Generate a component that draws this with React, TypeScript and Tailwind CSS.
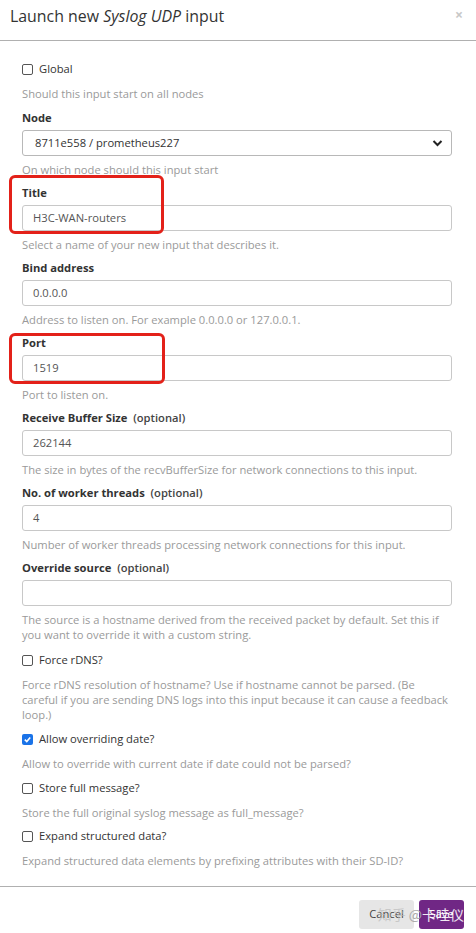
import React from "react";

const font = { fontFamily: '"Open Sans", "Noto Sans CJK SC", sans-serif' };

function Label({ text, optional }: { text: string; optional?: boolean }) {
  return (
    <div className="text-[11.2px] leading-[15px] font-bold text-[#333] mb-[5px]">
      {text}
      {optional && <span className="font-semibold text-[#444]">&nbsp; (optional)</span>}
    </div>
  );
}

function Help({ children }: { children: React.ReactNode }) {
  return <div className="text-[11.2px] leading-[15px] text-[#9a9a9a] mt-[6px]">{children}</div>;
}

function TextField({ label, value, help, optional }: { label: string; value: string; help: React.ReactNode; optional?: boolean }) {
  return (
    <div className="mb-[8px]">
      <Label text={label} optional={optional} />
      <div className="h-[26px] border border-[#c8c8c8] rounded-[3px] flex items-center pl-[10px] text-[11.2px] text-[#555]">
        {value}
      </div>
      <Help>{help}</Help>
    </div>
  );
}

function Check({ label, help, checked, cls }: { label: string; help: React.ReactNode; checked?: boolean; cls: string }) {
  return (
    <div className={cls}>
      <div className="flex items-center h-[15px] text-[11.2px] text-[#333]">
        {checked ? (
          <span className="w-[11px] h-[11px] rounded-[2px] bg-[#1a73e8] flex items-center justify-center mr-[6px]">
            <svg width="9" height="9" viewBox="0 0 10 10"><path d="M2 5.2 L4.2 7.3 L8 2.8" fill="none" stroke="#fff" strokeWidth="1.8" /></svg>
          </span>
        ) : (
          <span className="w-[11px] h-[11px] rounded-[2px] border border-[#555] mr-[6px]" />
        )}
        {label}
      </div>
      <div className="text-[11.2px] leading-[15px] text-[#9a9a9a] mt-[9px]">{help}</div>
    </div>
  );
}

export default function App() {
  return (
    <div className="w-[476px] h-[933px] bg-white relative overflow-hidden" style={font}>
      <div className="h-[41px] border-b border-[#b0b0b0] flex items-center pl-[10px] relative">
        <div className="text-[15.9px] text-[#333] leading-none -mt-[6px]">
          Launch new <i>Syslog UDP</i> input
        </div>
        <div className="absolute right-[13px] top-[4px] text-[14px] font-bold text-[#c8c8c8]">×</div>
      </div>
      <div className="pl-[22px] pr-[22px] pt-[21px]">
        <Check cls="mb-[9px]" label="Global" help="Should this input start on all nodes" />
        <div className="mb-[8px]">
          <Label text="Node" />
          <div className="h-[26px] mr-[2px] border border-[#b8b8b8] rounded-[3px] flex items-center justify-between pl-[12px] pr-[8px] text-[11.2px] text-[#333]">
            <span>8711e558 / prometheus227</span>
            <svg width="11" height="8" viewBox="0 0 11 8"><path d="M1.5 2 L5.5 6 L9.5 2" fill="none" stroke="#222" strokeWidth="2" /></svg>
          </div>
          <Help>On which node should this input start</Help>
        </div>
        <div className="pr-[2px]">
          <TextField label="Title" value="H3C-WAN-routers" help="Select a name of your new input that describes it." />
          <TextField label="Bind address" value="0.0.0.0" help="Address to listen on. For example 0.0.0.0 or 127.0.0.1." />
          <TextField label="Port" value="1519" help="Port to listen on." />
          <TextField label="Receive Buffer Size" optional value="262144" help="The size in bytes of the recvBufferSize for network connections to this input." />
          <TextField label="No. of worker threads" optional value="4" help="Number of worker threads processing network connections for this input." />
        </div>
        <div className="mb-[8px]">
          <Label text="Override source" optional />
          <div className="h-[26px] mr-[2px] border border-[#c8c8c8] rounded-[3px]" />
          <Help>The source is a hostname derived from the received packet by default. Set this if you want to override it with a custom string.</Help>
        </div>
        <Check
          cls="mt-[11px] mb-[10px]"
          label="Force rDNS?"
          help={
            <>
              Force rDNS resolution of hostname? Use if hostname cannot be parsed. (Be
              <br />
              careful if you are sending DNS logs into this input because it can cause a feedback
              <br />
              loop.)
            </>
          }
        />
        <Check cls="mb-[10px]" label="Allow overriding date?" checked help="Allow to override with current date if date could not be parsed?" />
        <Check cls="mb-[9px]" label="Store full message?" help="Store the full original syslog message as full_message?" />
        <Check cls="mb-[9px]" label="Expand structured data?" help="Expand structured data elements by prefixing attributes with their SD-ID?" />
      </div>
      <div className="absolute left-0 right-0 top-[886px] border-t border-[#b0b0b0] h-[47px] flex justify-end items-start pt-[13px] pr-[12px] gap-[5px]">
        <div className="w-[55px] h-[29px] rounded-[3px] bg-[#e6e6e6] flex items-center justify-center text-[11.2px] text-[#444]">Cancel</div>
        <div className="w-[45px] h-[29px] rounded-[3px] bg-[#702785] flex items-center justify-center text-[11.2px] text-white">Save</div>
        <div className="absolute right-[12px] top-[13px] h-[29px] flex items-center text-[14px] whitespace-nowrap" style={{ fontFamily: '"Noto Sans CJK SC", sans-serif' }}>
          <span className="text-[#bbb]/70">知乎 </span>
          <span className="text-[#aaa] ml-[3px]">@</span>
          <span className="text-white/90">卡哇仪</span>
        </div>
      </div>
      <div className="absolute left-[9px] top-[175px] w-[155px] h-[59px] border-[3px] border-[#e32119] rounded-[6px]" />
      <div className="absolute left-[9px] top-[333px] w-[156px] h-[51px] border-[3px] border-[#e32119] rounded-[6px]" />
    </div>
  );
}
